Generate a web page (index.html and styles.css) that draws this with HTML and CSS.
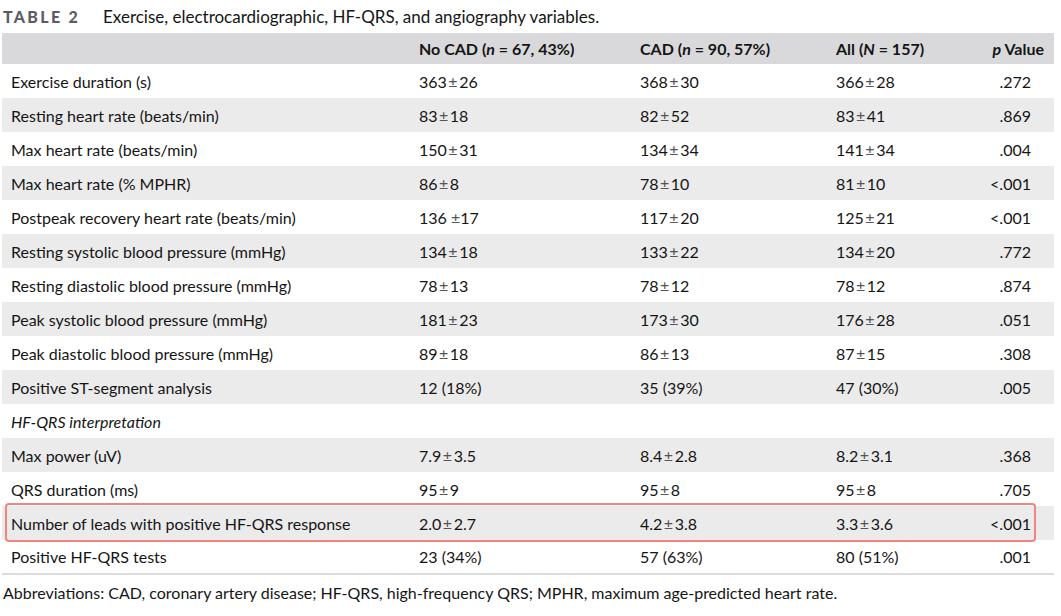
FILE: index.html
```html
<!DOCTYPE html>
<html>
<head>
<meta charset="utf-8">
<link rel="stylesheet" href="styles.css">
</head>
<body>
<div class="title"><span class="label">TABLE 2</span><span class="caption">Exercise, electrocardiographic, HF-QRS, and angiography variables.</span></div>
<div class="wrap">
<table class="tbl">
<colgroup><col class="c1"><col class="c2"><col class="c3"><col class="c4"><col class="c5"></colgroup>
<thead>
<tr><th></th><th>No CAD (<i>n</i> = 67, 43%)</th><th>CAD (<i>n</i> = 90, 57%)</th><th>All (<i>N</i> = 157)</th><th class="p"><i>p</i> Value</th></tr>
</thead>
<tbody>
<tr><td>Exercise duration (s)</td><td>363<span class="pm">±</span>26</td><td>368<span class="pm">±</span>30</td><td>366<span class="pm">±</span>28</td><td class="p">.272</td></tr>
<tr><td>Resting heart rate (beats/min)</td><td>83<span class="pm">±</span>18</td><td>82<span class="pm">±</span>52</td><td>83<span class="pm">±</span>41</td><td class="p">.869</td></tr>
<tr><td>Max heart rate (beats/min)</td><td>150<span class="pm">±</span>31</td><td>134<span class="pm">±</span>34</td><td>141<span class="pm">±</span>34</td><td class="p">.004</td></tr>
<tr><td>Max heart rate (% MPHR)</td><td>86<span class="pm">±</span>8</td><td>78<span class="pm">±</span>10</td><td>81<span class="pm">±</span>10</td><td class="p">&lt;.001</td></tr>
<tr><td>Postpeak recovery heart rate (beats/min)</td><td>136 <span class="pm pm-tight">±</span>17</td><td>117<span class="pm">±</span>20</td><td>125<span class="pm">±</span>21</td><td class="p">&lt;.001</td></tr>
<tr><td>Resting systolic blood pressure (mmHg)</td><td>134<span class="pm">±</span>18</td><td>133<span class="pm">±</span>22</td><td>134<span class="pm">±</span>20</td><td class="p">.772</td></tr>
<tr><td>Resting diastolic blood pressure (mmHg)</td><td>78<span class="pm">±</span>13</td><td>78<span class="pm">±</span>12</td><td>78<span class="pm">±</span>12</td><td class="p">.874</td></tr>
<tr><td>Peak systolic blood pressure (mmHg)</td><td>181<span class="pm">±</span>23</td><td>173<span class="pm">±</span>30</td><td>176<span class="pm">±</span>28</td><td class="p">.051</td></tr>
<tr><td>Peak diastolic blood pressure (mmHg)</td><td>89<span class="pm">±</span>18</td><td>86<span class="pm">±</span>13</td><td>87<span class="pm">±</span>15</td><td class="p">.308</td></tr>
<tr><td>Positive ST-segment analysis</td><td>12 (18%)</td><td>35 (39%)</td><td>47 (30%)</td><td class="p">.005</td></tr>
<tr><td><i>HF-QRS interpretation</i></td><td></td><td></td><td></td><td></td></tr>
<tr><td>Max power (uV)</td><td>7.9<span class="pm">±</span>3.5</td><td>8.4<span class="pm">±</span>2.8</td><td>8.2<span class="pm">±</span>3.1</td><td class="p">.368</td></tr>
<tr><td>QRS duration (ms)</td><td>95<span class="pm">±</span>9</td><td>95<span class="pm">±</span>8</td><td>95<span class="pm">±</span>8</td><td class="p">.705</td></tr>
<tr><td>Number of leads with positive HF-QRS response</td><td>2.0<span class="pm">±</span>2.7</td><td>4.2<span class="pm">±</span>3.8</td><td>3.3<span class="pm">±</span>3.6</td><td class="p">&lt;.001</td></tr>
<tr><td>Positive HF-QRS tests</td><td>23 (34%)</td><td>57 (63%)</td><td>80 (51%)</td><td class="p">.001</td></tr>
</tbody>
</table>
<div class="highlight"></div>
</div>
<div class="foot">Abbreviations: CAD, coronary artery disease; HF-QRS, high-frequency QRS; MPHR, maximum age-predicted heart rate.</div>
</body>
</html>
```
FILE: styles.css
```css
html, body {
  margin: 0;
  padding: 0;
  background: #ffffff;
}
body {
  font-family: Lato, "Liberation Sans", sans-serif;
  font-size: 16px;
  color: #151515;
  width: 1061px;
}
.title {
  height: 33px;
  display: flex;
  align-items: center;
  padding-left: 3px;
  white-space: nowrap;
}
.label {
  font-weight: 900;
  font-size: 16px;
  letter-spacing: 2.3px;
  color: #5c5c66;
  width: 100px;
}
.caption {
  font-size: 17px;
  color: #151515;
}
.wrap {
  position: relative;
  margin-left: 2px;
  width: 1052px;
}
.tbl {
  width: 1052px;
  border-collapse: collapse;
  table-layout: fixed;
  border-bottom: 2px solid #dcdcdc;
}
.c1 { width: 408px; }
.c2 { width: 221px; }
.c3 { width: 196px; }
.c4 { width: 130px; }
.c5 { width: 97px; }
.tbl th, .tbl td {
  padding: 0 0 0 9px;
  text-align: left;
  white-space: nowrap;
}
.tbl thead tr {
  background: #d9d9db;
  height: 31px;
}
.tbl th {
  font-weight: 700;
}
.tbl tbody tr {
  height: 34px;
}
.tbl tbody tr:nth-child(even) {
  background: #ebebeb;
}
.tbl th.p {
  text-align: right;
  padding-right: 10px;
}
.tbl td.p {
  text-align: right;
  padding-right: 23px;
}
.pm {
  color: #555;
  margin: 0 1.5px;
}
.pm-tight {
  margin: 0;
}
.highlight {
  position: absolute;
  left: 3px;
  top: 470px;
  width: 1027px;
  height: 35px;
  border: 2px solid #f1857e;
  border-radius: 4px;
  pointer-events: none;
}
.foot {
  padding-left: 3px;
  margin-top: 8px;
  line-height: 19px;
}
```
